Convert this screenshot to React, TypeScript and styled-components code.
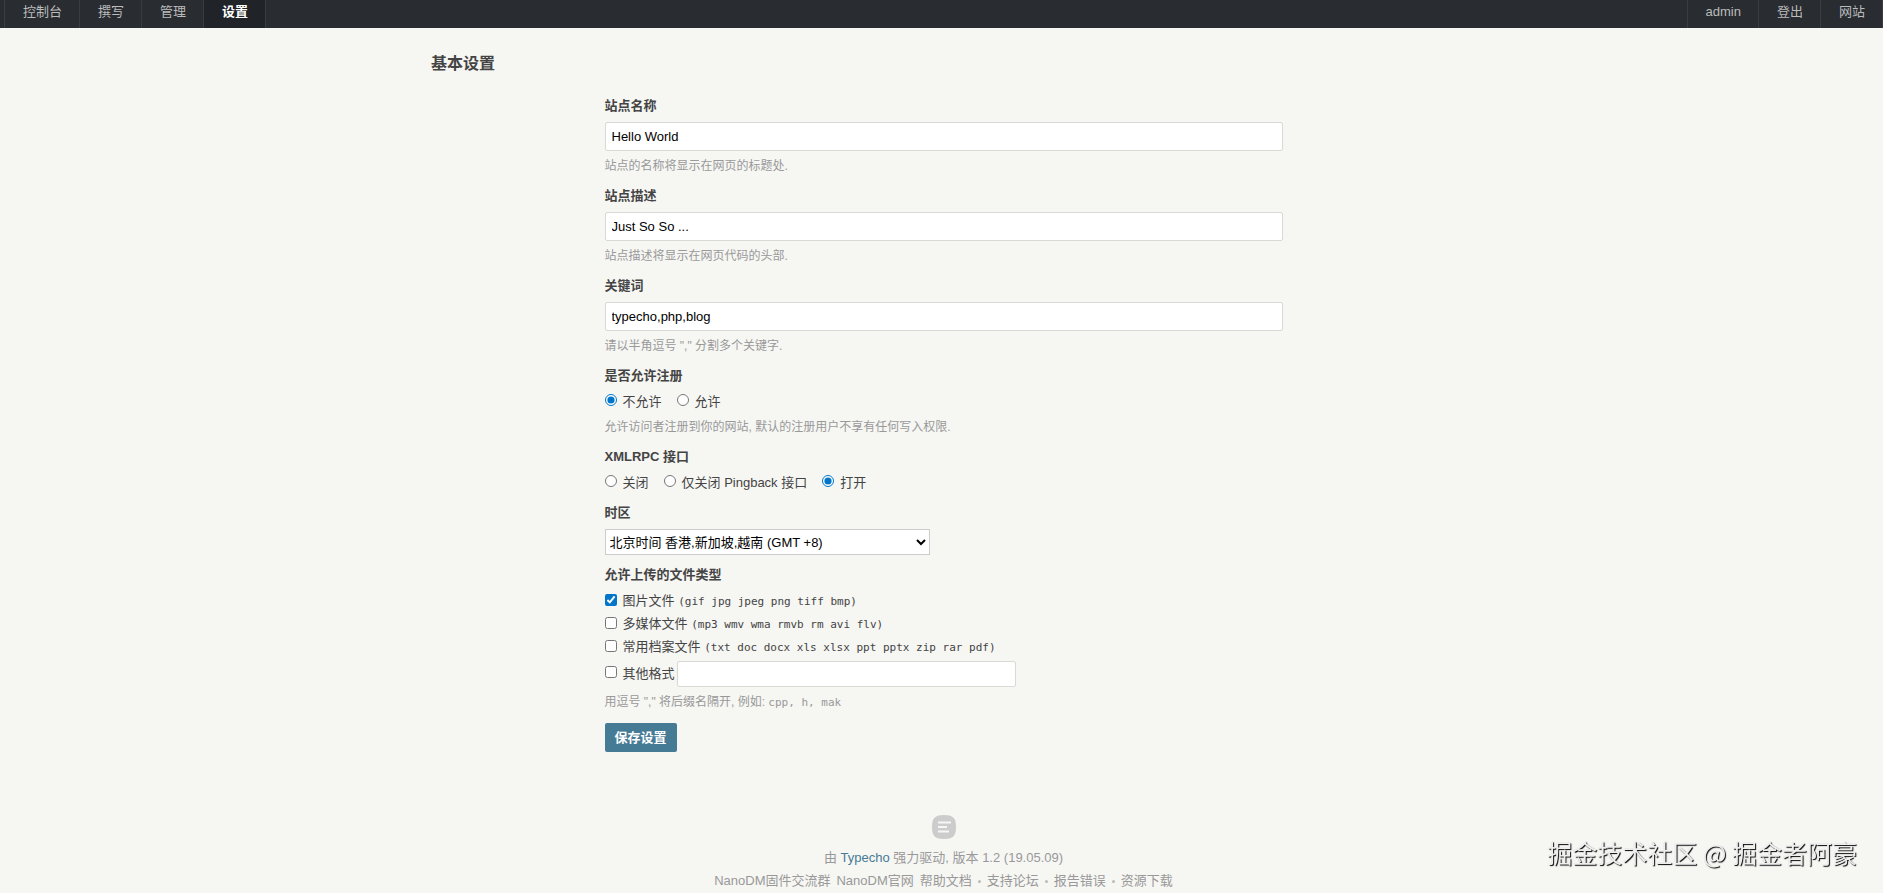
import React from "react";
import styled, { createGlobalStyle, css } from "styled-components";

const sans = `"Liberation Sans", "Noto Sans CJK SC", sans-serif`;
const mono = `"DejaVu Sans Mono", "Noto Sans CJK SC", monospace`;

const GlobalStyle = createGlobalStyle`
  *, *::before, *::after { box-sizing: border-box; }
  body {
    margin: 0;
    background: #f6f6f3;
    color: #444;
    font: 13px/20px ${sans};
  }
  a { text-decoration: none; }
`;

const Page = styled.div`
  padding-left: 4px;
`;

const NavBar = styled.header`
  display: flex;
  justify-content: space-between;
  height: 28px;
  margin-left: -4px;
  padding-left: 4px;
  background: #292d32;
`;

const NavGroup = styled.nav`
  display: flex;
  border-left: 1px solid #383d45;
`;

const NavLink = styled.a<{ $active?: boolean }>`
  padding: 2px 17px 0 18px;
  border-right: 1px solid #383d45;
  color: #bbb;
  line-height: 20px;
  ${(p) =>
    p.$active &&
    css`
      background: #202328;
      color: #fff;
      font-weight: bold;
    `}
`;

const Container = styled.main`
  max-width: 1043px;
  margin: 0 auto;
  padding: 0 9px;
`;

const Title = styled.h2`
  margin: 0;
  padding: 24px 0 20px;
  font-size: 16px;
  line-height: 24px;
`;

const Form = styled.form`
  max-width: 678px;
  margin: 0 auto;
`;

const Field = styled.div`
  margin-bottom: 10px;
`;

const Group = styled.fieldset`
  margin: 0 0 10px;
  padding: 0;
  border: 0;
`;

const caption = css`
  display: block;
  padding: 0;
  font-weight: bold;
  line-height: 20px;
`;

const Caption = styled.label`
  ${caption}
  margin-bottom: 6px;
`;

const Legend = styled.legend`
  ${caption}
  margin-bottom: 5px;
`;

const TextInput = styled.input`
  display: block;
  width: 100%;
  height: 29px;
  padding: 0 6px;
  border: 1px solid #d9d9d6;
  border-radius: 2px;
  background: #fff;
  color: #000;
  font: 13px ${sans};
`;

const ExtraInput = styled(TextInput)`
  width: 50%;
  height: 26px;
`;

const Note = styled.p`
  margin: 5px 0 0;
  color: #999;
  font-size: 12px;
  line-height: 20px;
`;

const Code = styled.code`
  font: 11px/20px ${mono};
`;

const RadioRow = styled.div`
  display: flex;
  gap: 15px;
  min-height: 21px;
`;

const Choice = styled.label`
  display: flex;
  align-items: center;
  gap: 6px;
`;

const Tick = styled.input`
  width: 12px;
  height: 12px;
  margin: 0 0 4px;
  accent-color: #0075ca;
`;

const CheckRow = styled.div`
  display: flex;
  align-items: center;
  gap: 2px;
  min-height: 23px;
  &:last-child {
    margin-top: 2px;
  }
`;

const Select = styled.select`
  display: block;
  width: 325px;
  height: 26px;
  padding: 0;
  border: 1px solid #ccc;
  background: #fff;
  color: #000;
  font: 13px ${sans};
`;

const SaveButton = styled.button`
  display: block;
  height: 29px;
  padding: 0 10px 2px;
  border: 0;
  border-radius: 2px;
  background: #467b96;
  color: #fff;
  font: bold 13px ${sans};
`;

const Footer = styled.footer`
  padding-top: 63px;
  color: #999;
  text-align: center;
`;

const Logo = styled.svg`
  display: block;
  width: 24px;
  height: 24px;
  margin: 0 auto 9px;
`;

const Credit = styled.p`
  margin: 0 0 3px;
  a {
    color: #467b96;
  }
`;

const FooterLinks = styled.nav`
  display: flex;
  justify-content: center;
  gap: 6px;
  a {
    color: #999;
  }
`;

const Dot = styled.span`
  width: 3px;
  height: 3px;
  margin-top: 9px;
  border-radius: 50%;
  background: #bbb;
`;

const Watermark = styled.div`
  position: fixed;
  right: 26px;
  bottom: 23px;
  color: #eee;
  font: 25px/36px "Noto Sans CJK SC", sans-serif;
  text-shadow: 1px 1px 1px #000;
`;

const textFields = [
  { id: "title", label: "站点名称", value: "Hello World", note: "站点的名称将显示在网页的标题处." },
  { id: "description", label: "站点描述", value: "Just So So ...", note: "站点描述将显示在网页代码的头部." },
  { id: "keywords", label: "关键词", value: "typecho,php,blog", note: '请以半角逗号 "," 分割多个关键字.' },
];

const fileTypes = [
  { id: "image", label: "图片文件", list: "(gif jpg jpeg png tiff bmp)", on: true },
  { id: "media", label: "多媒体文件", list: "(mp3 wmv wma rmvb rm avi flv)", on: false },
  { id: "doc", label: "常用档案文件", list: "(txt doc docx xls xlsx ppt pptx zip rar pdf)", on: false },
];

function Radios({ name, options, checked }: { name: string; options: string[]; checked: string }) {
  return (
    <RadioRow>
      {options.map((o) => (
        <Choice key={o}>
          <Tick type="radio" name={name} defaultChecked={o === checked} />
          {o}
        </Choice>
      ))}
    </RadioRow>
  );
}

export default function App() {
  return (
    <Page>
      <GlobalStyle />
      <NavBar>
        <NavGroup>
          <NavLink href="#">控制台</NavLink>
          <NavLink href="#">撰写</NavLink>
          <NavLink href="#">管理</NavLink>
          <NavLink href="#" $active>设置</NavLink>
        </NavGroup>
        <NavGroup>
          <NavLink href="#">admin</NavLink>
          <NavLink href="#">登出</NavLink>
          <NavLink href="#">网站</NavLink>
        </NavGroup>
      </NavBar>

      <Container>
        <Title>基本设置</Title>
        <Form onSubmit={(e) => e.preventDefault()}>
          {textFields.map((f) => (
            <Field key={f.id}>
              <Caption htmlFor={f.id}>{f.label}</Caption>
              <TextInput id={f.id} type="text" defaultValue={f.value} />
              <Note>{f.note}</Note>
            </Field>
          ))}
          <Group>
            <Legend>是否允许注册</Legend>
            <Radios name="register" options={["不允许", "允许"]} checked="不允许" />
            <Note>允许访问者注册到你的网站, 默认的注册用户不享有任何写入权限.</Note>
          </Group>
          <Group>
            <Legend>XMLRPC 接口</Legend>
            <Radios name="xmlrpc" options={["关闭", "仅关闭 Pingback 接口", "打开"]} checked="打开" />
          </Group>
          <Field>
            <Caption htmlFor="timezone">时区</Caption>
            <Select id="timezone">
              <option>北京时间 香港,新加坡,越南 (GMT +8)</option>
            </Select>
          </Field>
          <Group>
            <Legend>允许上传的文件类型</Legend>
            <div>
              {fileTypes.map((t) => (
                <CheckRow key={t.id}>
                  <Choice>
                    <Tick type="checkbox" defaultChecked={t.on} />
                    <span>
                      {t.label} <Code>{t.list}</Code>
                    </span>
                  </Choice>
                </CheckRow>
              ))}
              <CheckRow>
                <Choice>
                  <Tick type="checkbox" />
                  其他格式
                </Choice>
                <ExtraInput type="text" aria-label="其他格式" />
              </CheckRow>
            </div>
            <Note>
              用逗号 "," 将后缀名隔开, 例如: <Code>cpp, h, mak</Code>
            </Note>
          </Group>
          <SaveButton type="submit">保存设置</SaveButton>
        </Form>
      </Container>

      <Footer>
        <Logo viewBox="0 0 24 24" aria-hidden="true">
          <path
            d="M12 0C21 0 24 3 24 12S21 24 12 24 0 21 0 12 3 0 12 0Z"
            fill="#ccc"
          />
          <path d="M6 7.5H19M6 12H15M6 16.5H17" stroke="#f6f6f3" strokeWidth="2" />
        </Logo>
        <Credit>
          由 <a href="#">Typecho</a> 强力驱动, 版本 1.2 (19.05.09)
        </Credit>
        <FooterLinks>
          <a href="#">NanoDM固件交流群</a>
          <a href="#">NanoDM官网</a>
          <a href="#">帮助文档</a>
          <Dot />
          <a href="#">支持论坛</a>
          <Dot />
          <a href="#">报告错误</a>
          <Dot />
          <a href="#">资源下载</a>
        </FooterLinks>
      </Footer>
      <Watermark>掘金技术社区 @ 掘金者阿豪</Watermark>
    </Page>
  );
}
